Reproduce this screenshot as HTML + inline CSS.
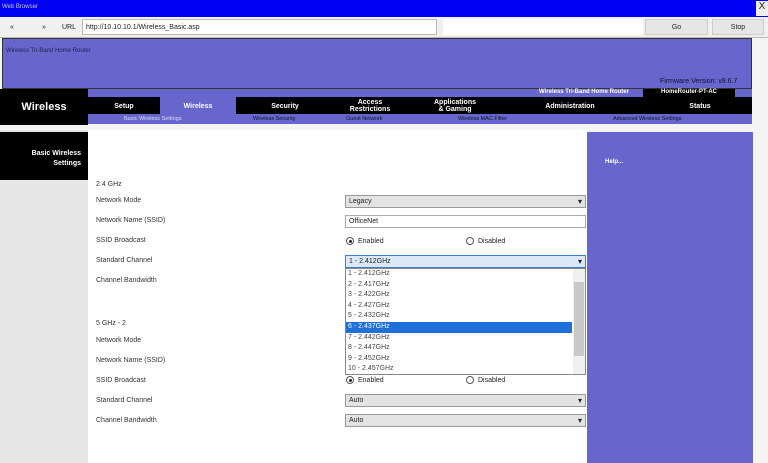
<!DOCTYPE html><html><head><style>
*{margin:0;padding:0;box-sizing:border-box}
body{width:768px;height:463px;overflow:hidden;background:#fff;font-family:"Liberation Sans",sans-serif;font-size:7px;color:#222;position:relative}
.a{position:absolute}
.w{color:#fff;font-weight:bold;text-align:center}
.lbl{position:absolute;left:96px;font-size:7px;color:#333}
.sel{position:absolute;left:345px;width:241px;height:13px;border:1px solid #999;background:#e3e3e3;font-size:7px;padding:2px 3px}
.sel.d:after{content:"▾";position:absolute;right:3px;top:1px;font-size:8px}
.it{position:absolute;left:346px;width:226px;height:10.6px;font-size:7px;padding-left:2px;line-height:10.6px;color:#444}
.r{position:absolute;font-size:7px}
.r i{display:inline-block;width:8px;height:8px;border:1px solid #555;border-radius:50%;vertical-align:-2px;margin-right:4px;position:relative}
.r i.on:after{content:"";position:absolute;left:1.5px;top:1.5px;width:3px;height:3px;border-radius:50%;background:#222}
</style></head><body>
<div class="a" style="left:0;top:0;width:768px;height:17px;background:#0000f5"></div>
<div class="a" style="left:2px;top:4px;color:#ccd;font-size:6px">Web Browser</div>
<div class="a" style="left:756px;top:1px;width:12px;height:15px;background:#eee;font-size:10px;text-align:center">X</div>
<div class="a" style="left:0;top:17px;width:768px;height:21px;background:#f0f0f0;border-bottom:1px solid #bbb"></div>
<div class="a" style="left:10px;top:24px;font-size:7px">«</div>
<div class="a" style="left:42px;top:24px;font-size:7px">»</div>
<div class="a" style="left:62px;top:24px;font-size:7px">URL</div>
<div class="a" style="left:82px;top:19px;width:355px;height:16px;background:#fff;border:1px solid #bbb;font-size:7px;padding:4px 3px">http://10.10.10.1/Wireless_Basic.asp</div>
<div class="a" style="left:443px;top:19px;width:200px;height:16px;background:#fff"></div>
<div class="a" style="left:645px;top:19px;width:63px;height:16px;background:#e6e6e6;border:1px solid #ccc;text-align:center;padding-top:4px">Go</div>
<div class="a" style="left:712px;top:19px;width:52px;height:16px;background:#e6e6e6;border:1px solid #ccc;text-align:center;padding-top:4px">Stop</div>
<div class="a" style="left:0;top:38px;width:768px;height:425px;background:#f4f4f4"></div>
<div class="a" style="left:2px;top:38px;width:750px;height:51px;background:#6666cc;border:1px solid #333"></div>
<div class="a" style="left:6px;top:48px;font-size:6px;color:#225">Wireless Tri-Band Home Router</div>
<div class="a" style="left:660px;top:78px;font-size:7px;color:#113">Firmware Version: v8.6.7</div>
<div class="a" style="left:0;top:89px;width:88px;height:36px;background:#000"></div>
<div class="a w" style="left:0;top:101px;width:88px;font-size:11px">Wireless</div>
<div class="a" style="left:88px;top:89px;width:664px;height:8px;background:#6666cc"></div>
<div class="a w" style="left:525px;top:89px;width:118px;height:8px;font-size:6px">Wireless Tri-Band Home Router</div>
<div class="a w" style="left:643px;top:89px;width:92px;height:8px;background:#000;font-size:6px">HomeRouter-PT-AC</div>
<div class="a" style="left:88px;top:97px;width:664px;height:17px;background:#000"></div>
<div class="a" style="left:160px;top:97px;width:76px;height:17px;background:#6666cc"></div>
<div class="a w" style="left:88px;top:103px;width:72px;font-size:7px">Setup</div>
<div class="a w" style="left:160px;top:103px;width:76px;font-size:7px">Wireless</div>
<div class="a w" style="left:240px;top:103px;width:90px;font-size:7px">Security</div>
<div class="a w" style="left:330px;top:99px;width:80px;font-size:7px;line-height:7px">Access<br>Restrictions</div>
<div class="a w" style="left:415px;top:99px;width:80px;font-size:7px;line-height:7px">Applications<br>&amp; Gaming</div>
<div class="a w" style="left:510px;top:103px;width:120px;font-size:7px">Administration</div>
<div class="a w" style="left:650px;top:103px;width:100px;font-size:7px">Status</div>
<div class="a" style="left:88px;top:114px;width:664px;height:10px;background:#6666cc"></div>
<div class="a" style="left:88px;top:116px;width:664px;font-size:5.5px;color:#112">
<span class="a" style="left:36px;color:#ddf">Basic Wireless Settings</span><span class="a" style="left:165px">Wireless Security</span><span class="a" style="left:258px">Guest Network</span><span class="a" style="left:370px">Wireless MAC Filter</span><span class="a" style="left:525px">Advanced Wireless Settings</span></div>
<div class="a" style="left:0;top:130px;width:88px;height:333px;background:#e6e6e6"></div>
<div class="a" style="left:0;top:132px;width:88px;height:48px;background:#000"></div>
<div class="a w" style="left:0;top:149px;width:81px;font-size:7px;text-align:right;line-height:10px">Basic Wireless<br>Settings</div>
<div class="a" style="left:88px;top:130px;width:499px;height:333px;background:#fff"></div>
<div class="a" style="left:587px;top:132px;width:166px;height:331px;background:#6666cc"></div>
<div class="a w" style="left:605px;top:159px;font-size:6px">Help...</div>
<div class="lbl" style="top:181px">2.4 GHz</div>
<div class="lbl" style="top:197px">Network Mode</div>
<div class="lbl" style="top:217px">Network Name (SSID)</div>
<div class="lbl" style="top:237px">SSID Broadcast</div>
<div class="lbl" style="top:257px">Standard Channel</div>
<div class="lbl" style="top:277px">Channel Bandwidth</div>
<div class="lbl" style="top:320px">5 GHz - 2</div>
<div class="lbl" style="top:337px">Network Mode</div>
<div class="lbl" style="top:357px">Network Name (SSID)</div>
<div class="lbl" style="top:377px">SSID Broadcast</div>
<div class="lbl" style="top:397px">Standard Channel</div>
<div class="lbl" style="top:417px">Channel Bandwidth</div>
<div class="sel d" style="top:195px">Legacy</div>
<div class="sel" style="top:215px;background:#fff;border-color:#aaa">OfficeNet</div>
<div class="r" style="left:346px;top:237px"><i class="on"></i>Enabled</div>
<div class="r" style="left:466px;top:237px"><i></i>Disabled</div>
<div class="sel d" style="top:255px;background:#dbe9f7;border-color:#3a7fd0">1 - 2.412GHz</div>
<div class="a" style="left:345px;top:268px;width:241px;height:107px;background:#fff;border:1px solid #888"></div>
<div class="a" style="left:573px;top:269px;width:12px;height:105px;background:#f0f0f0"></div>
<div class="a" style="left:574px;top:282px;width:10px;height:74px;background:#c8c8c8"></div>
<div class="it" style="top:269px">1 - 2.412GHz</div>
<div class="it" style="top:279.6px">2 - 2.417GHz</div>
<div class="it" style="top:290.2px">3 - 2.422GHz</div>
<div class="it" style="top:300.8px">4 - 2.427GHz</div>
<div class="it" style="top:311.4px">5 - 2.432GHz</div>
<div class="it" style="top:322px;background:#1e6fd9;color:#fff">6 - 2.437GHz</div>
<div class="it" style="top:332.6px">7 - 2.442GHz</div>
<div class="it" style="top:343.2px">8 - 2.447GHz</div>
<div class="it" style="top:353.8px">9 - 2.452GHz</div>
<div class="it" style="top:364.4px">10 - 2.457GHz</div>
<div class="r" style="left:346px;top:376px"><i class="on"></i>Enabled</div>
<div class="r" style="left:466px;top:376px"><i></i>Disabled</div>
<div class="sel d" style="top:394px">Auto</div>
<div class="sel d" style="top:414px">Auto</div>
</body></html>
